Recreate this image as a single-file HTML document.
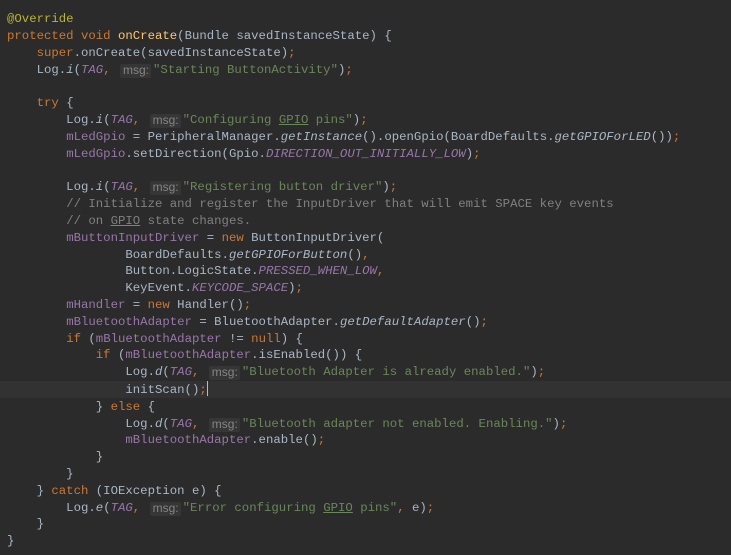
<!DOCTYPE html>
<html><head><meta charset="utf-8"><style>
html,body{margin:0;padding:0;background:#2b2b2b;width:731px;height:555px;overflow:hidden}
pre{margin:0;position:absolute;left:7px;top:11.4px;font-family:"Liberation Mono",monospace;font-size:12.33px;line-height:16.8px;color:#a9b7c6;white-space:pre}
.k{color:#cc7832}.a{color:#bbb529}.m{color:#ffc66d}.s{color:#6a8759}.f{color:#9876aa}.sf{color:#9876aa;font-style:italic}.i{font-style:italic}.c{color:#808080}
.h{display:inline-block;height:14px;line-height:13px;vertical-align:-1px;font-family:"Liberation Sans",sans-serif;font-size:12px;color:#858585;background:#363636;padding:0 2px 0 3px;border-radius:2px;margin:0 2px 0 2px}
.u{text-decoration:underline;text-decoration-color:#6a8759}
.cl{position:absolute;left:0;top:381px;width:731px;height:16.8px;background:#323232}
.cur{display:inline-block;width:1px;height:15px;background:#bbb;vertical-align:-3px}
</style></head><body>
<div class="cl"></div>
<pre><span class="a">@Override</span>
<span class="k">protected void </span><span class="m">onCreate</span>(Bundle savedInstanceState) {
    <span class="k">super</span>.onCreate(savedInstanceState)<span class="k">;</span>
    Log.<span class="i">i</span>(<span class="sf">TAG</span><span class="k">,</span> <span class="h">msg:</span><span class="s">"Starting ButtonActivity"</span>)<span class="k">;</span>

    <span class="k">try </span>{
        Log.<span class="i">i</span>(<span class="sf">TAG</span><span class="k">,</span> <span class="h">msg:</span><span class="s">"Configuring <span class="u">GPIO</span> pins"</span>)<span class="k">;</span>
        <span class="f">mLedGpio</span> = PeripheralManager.<span class="i">getInstance</span>().openGpio(BoardDefaults.<span class="i">getGPIOForLED</span>())<span class="k">;</span>
        <span class="f">mLedGpio</span>.setDirection(Gpio.<span class="sf">DIRECTION_OUT_INITIALLY_LOW</span>)<span class="k">;</span>

        Log.<span class="i">i</span>(<span class="sf">TAG</span><span class="k">,</span> <span class="h">msg:</span><span class="s">"Registering button driver"</span>)<span class="k">;</span>
        <span class="c">// Initialize and register the InputDriver that will emit SPACE key events</span>
        <span class="c">// on <span style="text-decoration:underline">GPIO</span> state changes.</span>
        <span class="f">mButtonInputDriver</span> = <span class="k">new </span>ButtonInputDriver(
                BoardDefaults.<span class="i">getGPIOForButton</span>()<span class="k">,</span>
                Button.LogicState.<span class="sf">PRESSED_WHEN_LOW</span><span class="k">,</span>
                KeyEvent.<span class="sf">KEYCODE_SPACE</span>)<span class="k">;</span>
        <span class="f">mHandler</span> = <span class="k">new </span>Handler()<span class="k">;</span>
        <span class="f">mBluetoothAdapter</span> = BluetoothAdapter.<span class="i">getDefaultAdapter</span>()<span class="k">;</span>
        <span class="k">if </span>(<span class="f">mBluetoothAdapter</span> != <span class="k">null</span>) {
            <span class="k">if </span>(<span class="f">mBluetoothAdapter</span>.isEnabled()) {
                Log.<span class="i">d</span>(<span class="sf">TAG</span><span class="k">,</span> <span class="h">msg:</span><span class="s">"Bluetooth Adapter is already enabled."</span>)<span class="k">;</span>
                initScan()<span class="k">;</span><span class="cur"></span>
            } <span class="k">else </span>{
                Log.<span class="i">d</span>(<span class="sf">TAG</span><span class="k">,</span> <span class="h">msg:</span><span class="s">"Bluetooth adapter not enabled. Enabling."</span>)<span class="k">;</span>
                <span class="f">mBluetoothAdapter</span>.enable()<span class="k">;</span>
            }
        }
    } <span class="k">catch </span>(IOException e) {
        Log.<span class="i">e</span>(<span class="sf">TAG</span><span class="k">,</span> <span class="h">msg:</span><span class="s">"Error configuring <span class="u">GPIO</span> pins"</span><span class="k">,</span> e)<span class="k">;</span>
    }
}</pre>
</body></html>
